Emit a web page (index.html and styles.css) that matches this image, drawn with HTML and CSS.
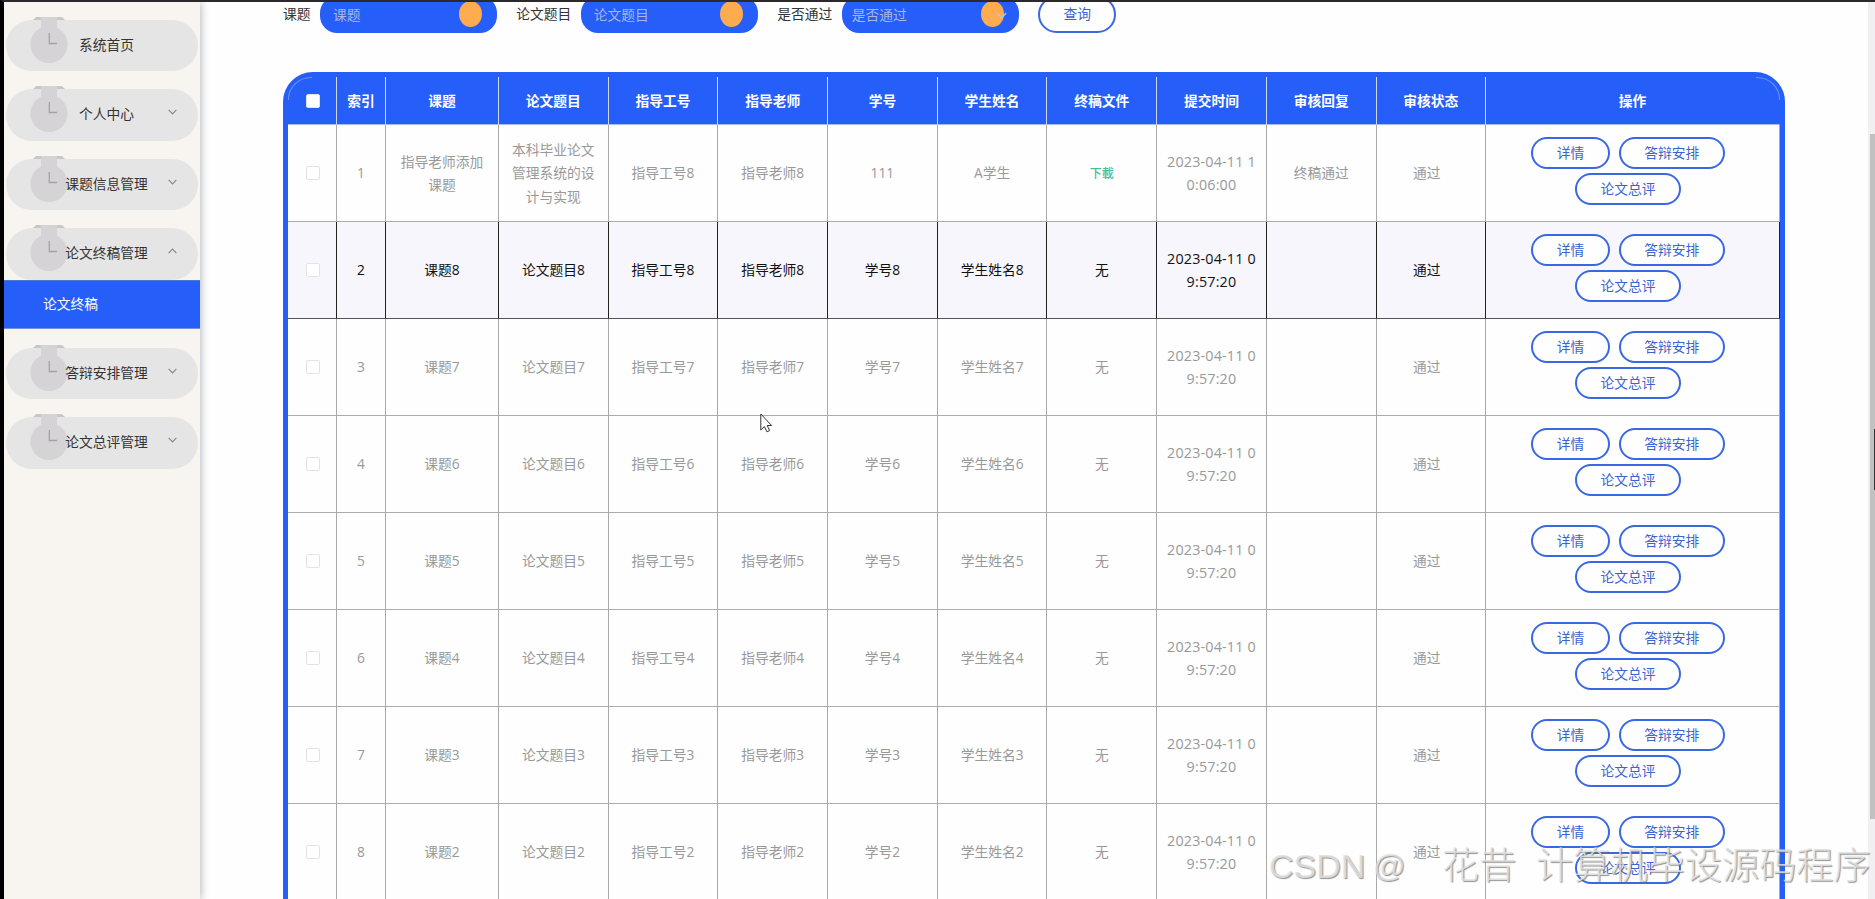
FILE: index.html
```html
<!DOCTYPE html>
<html lang="zh-CN">
<head>
    <meta charset="UTF-8">
    <meta name="viewport" content="width=device-width, initial-scale=1.0">
    <title>论文终稿</title>
    <link rel="stylesheet" href="styles.css">
</head>
<body>
    <svg class="symbols">
        <symbol id="watch" viewBox="0 0 40 47">
            <path d="M3 3 L6 0 H32 L35 3 Z" fill="#c8c7c9"/>
            <path d="M11 0 H27 V14 H11 Z" fill="#d5d3d6"/>
            <circle cx="19" cy="27.5" r="18.6" fill="#d5d3d6"/>
            <path d="M19.3 16 V26.5 H27" fill="none" stroke="#a3a2a4" stroke-width="1.3"/>
        </symbol>
        <symbol id="arrow" viewBox="0 0 10 6">
            <path d="M0.7 0.7 L5 5 L9.3 0.7" fill="none" stroke="currentColor" stroke-width="1.3"/>
        </symbol>
    </svg>

    <!-- 侧边菜单 -->
    <aside class="sidebar">
        <a class="menu-item"><svg class="watch"><use href="#watch"/></svg><span>系统首页</span></a>
        <a class="menu-item"><svg class="watch"><use href="#watch"/></svg><span>个人中心</span><svg class="arrow"><use href="#arrow"/></svg></a>
        <a class="menu-item"><svg class="watch"><use href="#watch"/></svg><span>课题信息管理</span><svg class="arrow"><use href="#arrow"/></svg></a>
        <a class="menu-item open"><svg class="watch"><use href="#watch"/></svg><span>论文终稿管理</span><svg class="arrow"><use href="#arrow"/></svg></a>
        <a class="submenu-item">论文终稿</a>
        <a class="menu-item"><svg class="watch"><use href="#watch"/></svg><span>答辩安排管理</span><svg class="arrow"><use href="#arrow"/></svg></a>
        <a class="menu-item"><svg class="watch"><use href="#watch"/></svg><span>论文总评管理</span><svg class="arrow"><use href="#arrow"/></svg></a>
    </aside>

    <main class="main">
        <!-- 查询条件 -->
        <div class="search">
            <label>课题</label>
            <div class="field">课题<i class="dot"></i></div>
            <label>论文题目</label>
            <div class="field">论文题目<i class="dot"></i></div>
            <label>是否通过</label>
            <div class="field select">是否通过<i class="dot"></i><svg class="arrow"><use href="#arrow"/></svg></div>
            <button class="btn search-btn">查询</button>
        </div>

        <!-- 数据表格 -->
        <div class="table-box">
            <table>
                <colgroup>
                    <col class="c-small"><col class="c-small"><col class="c-topic">
                    <col span="9" class="c-normal">
                    <col class="c-action">
                </colgroup>
                <thead>
                    <tr>
                        <th><i class="check"></i></th><th>索引</th><th>课题</th><th>论文题目</th><th>指导工号</th><th>指导老师</th><th>学号</th><th>学生姓名</th><th>终稿文件</th><th>提交时间</th><th>审核回复</th><th>审核状态</th><th>操作</th>
                    </tr>
                </thead>
                <tbody>
                    <tr>
                        <td><i class="check"></i></td><td>1</td><td>指导老师添加课题</td><td>本科毕业论文管理系统的设计与实现</td><td>指导工号8</td><td>指导老师8</td><td>111</td><td>A学生</td><td><a class="download">下載</a></td><td class="time">2023-04-11 1<br>0:06:00</td><td>终稿通过</td><td class="status">通过</td>
                        <td class="actions"><button class="btn">详情</button><button class="btn">答辩安排</button><button class="btn">论文总评</button></td>
                    </tr>
                    <tr class="hover">
                        <td><i class="check"></i></td><td>2</td><td>课题8</td><td>论文题目8</td><td>指导工号8</td><td>指导老师8</td><td>学号8</td><td>学生姓名8</td><td>无</td><td class="time">2023-04-11 0<br>9:57:20</td><td></td><td class="status">通过</td>
                        <td class="actions"><button class="btn">详情</button><button class="btn">答辩安排</button><button class="btn">论文总评</button></td>
                    </tr>
                    <tr>
                        <td><i class="check"></i></td><td>3</td><td>课题7</td><td>论文题目7</td><td>指导工号7</td><td>指导老师7</td><td>学号7</td><td>学生姓名7</td><td>无</td><td class="time">2023-04-11 0<br>9:57:20</td><td></td><td class="status">通过</td>
                        <td class="actions"><button class="btn">详情</button><button class="btn">答辩安排</button><button class="btn">论文总评</button></td>
                    </tr>
                    <tr>
                        <td><i class="check"></i></td><td>4</td><td>课题6</td><td>论文题目6</td><td>指导工号6</td><td>指导老师6</td><td>学号6</td><td>学生姓名6</td><td>无</td><td class="time">2023-04-11 0<br>9:57:20</td><td></td><td class="status">通过</td>
                        <td class="actions"><button class="btn">详情</button><button class="btn">答辩安排</button><button class="btn">论文总评</button></td>
                    </tr>
                    <tr>
                        <td><i class="check"></i></td><td>5</td><td>课题5</td><td>论文题目5</td><td>指导工号5</td><td>指导老师5</td><td>学号5</td><td>学生姓名5</td><td>无</td><td class="time">2023-04-11 0<br>9:57:20</td><td></td><td class="status">通过</td>
                        <td class="actions"><button class="btn">详情</button><button class="btn">答辩安排</button><button class="btn">论文总评</button></td>
                    </tr>
                    <tr>
                        <td><i class="check"></i></td><td>6</td><td>课题4</td><td>论文题目4</td><td>指导工号4</td><td>指导老师4</td><td>学号4</td><td>学生姓名4</td><td>无</td><td class="time">2023-04-11 0<br>9:57:20</td><td></td><td class="status">通过</td>
                        <td class="actions"><button class="btn">详情</button><button class="btn">答辩安排</button><button class="btn">论文总评</button></td>
                    </tr>
                    <tr>
                        <td><i class="check"></i></td><td>7</td><td>课题3</td><td>论文题目3</td><td>指导工号3</td><td>指导老师3</td><td>学号3</td><td>学生姓名3</td><td>无</td><td class="time">2023-04-11 0<br>9:57:20</td><td></td><td class="status">通过</td>
                        <td class="actions"><button class="btn">详情</button><button class="btn">答辩安排</button><button class="btn">论文总评</button></td>
                    </tr>
                    <tr>
                        <td><i class="check"></i></td><td>8</td><td>课题2</td><td>论文题目2</td><td>指导工号2</td><td>指导老师2</td><td>学号2</td><td>学生姓名2</td><td>无</td><td class="time">2023-04-11 0<br>9:57:20</td><td></td><td class="status">通过</td>
                        <td class="actions"><button class="btn">详情</button><button class="btn">答辩安排</button><button class="btn">论文总评</button></td>
                    </tr>
                </tbody>
            </table>
        </div>
    </main>

    <!-- 滚动条 -->
    <div class="scrollbar">
        <div class="thumb"></div>
        <div class="edge-mark"></div>
    </div>

    <svg class="cursor" viewBox="0 0 13 20">
        <path d="M0.8 1 V17 L4.4 13.6 L7 18.8 L9.6 17.6 L7.2 12.5 H11.6 Z" fill="#fff" stroke="#333" stroke-width="1"/>
    </svg>

    <!-- 水印 -->
    <div class="watermark"><span class="wm-site">CSDN</span><span class="wm-at">@</span><span class="wm-name">花昔</span><span>计算机毕设源码程序</span></div>
</body>
</html>
```
FILE: styles.css
```css
* {
    margin: 0;
    padding: 0;
    box-sizing: border-box;
}

body {
    display: flex;
    position: relative;
    width: 100%;
    height: 899px;
    overflow: hidden;
    border-top: 2px solid #2b292b;
    border-left: 4px solid #000;
    background: #fefefe;
    color: #333;
    font-family: "Open Sans", "Noto Sans CJK SC", sans-serif;
    font-size: 13.75px;
}

.symbols {
    position: absolute;
    width: 0;
    height: 0;
}

/* 侧边菜单 */
.sidebar {
    flex: none;
    width: 196px;
    height: 897px;
    padding-top: 17.5px;
    background: #f8f5f0;
    box-shadow: 1px 0 8px rgba(0, 21, 41, 0.3);
}

.menu-item {
    display: flex;
    align-items: center;
    justify-content: center;
    position: relative;
    width: 192px;
    height: 51.5px;
    margin: 0 2px 18px;
    padding: 0 0 3px 9px;
    border-radius: 26px;
    background: #e5e5e5;
    color: #333;
}

.menu-item .watch {
    position: absolute;
    left: 24px;
    top: -3px;
    width: 40px;
    height: 47px;
}

.menu-item span {
    position: relative;
}

.menu-item .arrow {
    position: absolute;
    right: 21px;
    top: 20px;
    width: 9px;
    height: 6px;
    color: #85878c;
}

.menu-item.open {
    margin-bottom: 0;
}

.menu-item.open .arrow {
    transform: rotate(180deg);
}

.submenu-item {
    display: flex;
    align-items: center;
    height: 49px;
    margin-bottom: 19px;
    padding: 0 0 2px 39px;
    border-top: 1px solid #4a78d6;
    border-bottom: 1px solid #6f95dc;
    background: #265efa;
    color: #fff;
}

/* 主体 */
.main {
    flex: 1;
    padding-left: 83px;
    overflow: hidden;
}

.search {
    display: flex;
    align-items: center;
    height: 37px;
    margin-top: -6px;
}

.search label {
    line-height: 20px;
    margin-right: 9.5px;
    padding-bottom: 2px;
}

.field {
    display: flex;
    align-items: center;
    position: relative;
    width: 177px;
    height: 37px;
    margin-right: 19.3px;
    padding: 0 0 2px 13px;
    border-radius: 17px;
    background: #265efa;
    color: #a9b6e2;
}

.field.select {
    padding-left: 10px;
}

.field .dot {
    position: absolute;
    right: 15px;
    top: 5px;
    width: 23px;
    height: 26px;
    border-radius: 50%;
    background: #ffab4f;
}

.field .arrow {
    position: absolute;
    right: 12px;
    top: 16px;
    width: 11px;
    height: 7px;
    color: #c0c4cc;
}

.btn {
    height: 31.5px;
    padding: 0 23.5px;
    border: 2px solid #3a68e4;
    border-radius: 16px;
    background: #fefefe;
    color: #3c63cf;
    font-family: inherit;
    font-size: 13.75px;
    line-height: 20px;
}

.search-btn {
    height: 37px;
    padding-bottom: 2px;
    border-radius: 19px;
}

/* 表格 */
.table-box {
    width: 1502px;
    height: 900px;
    margin-top: 39px;
    border: 5px solid #265efa;
    border-radius: 30px 30px 0 0;
    background: #265efa;
}

table {
    width: 1492px;
    table-layout: fixed;
    border-collapse: separate;
    border-spacing: 0;
    text-align: center;
}

.c-small {
    width: 49px;
}

.c-topic {
    width: 113px;
}

.c-normal {
    width: 109.7px;
}

th {
    position: relative;
    height: 48px;
    padding-bottom: 2px;
    border-right: 1px solid #cdd8f5;
    border-bottom: 1px solid #a9bdf3;
    color: #fff;
    font-weight: 700;
}

th:first-child {
    padding: 0;
}

/* 表头圆角处的细线 */
th:first-child::before,
th:last-child::before {
    content: "";
    position: absolute;
    top: 0;
    width: 23px;
    height: 22px;
}

th:first-child::before {
    left: 0;
    border-top: 1px solid #6c90f5;
    border-left: 1px solid #6c90f5;
    border-top-left-radius: 23px 22px;
}

th:last-child::before {
    right: -1px;
    border-top: 1px solid #6c90f5;
    border-right: 1px solid #6c90f5;
    border-top-right-radius: 23px 22px;
}

th:last-child {
    border-right-color: transparent;
}

td {
    height: 97px;
    padding: 0 12px;
    border-right: 1px solid #a9a9a9;
    border-bottom: 1px solid #acacac;
    background: #fefefe;
    color: #999;
    line-height: 23.5px;
}

td:first-child,
td:nth-child(2) {
    padding: 0;
}

.hover td {
    border-right-color: #222;
    border-bottom-color: #555;
    background: #f6f6fc;
    color: #111;
}

.check {
    display: block;
    width: 14px;
    height: 14px;
    margin: 0 auto;
    border: 1px solid #e2e3e8;
    border-radius: 2px;
    background: #fff;
}

td:first-child .check,
th:first-child .check {
    margin-left: 18px;
}

.download {
    color: #45bd9f;
    font-size: 12px;
    font-weight: 500;
}

td.time {
    padding: 0;
    font-size: 14.3px;
    letter-spacing: 0.2px;
}

td.status {
    padding: 0 20px 0 12px;
}

td.actions {
    padding: 12px 40px 0;
    font-size: 0;
    line-height: 0;
    vertical-align: top;
}

.actions .btn {
    margin: 0 9px 4.7px 0;
}

/* 滚动条 */
.scrollbar {
    position: relative;
    flex: none;
    width: 7px;
    height: 897px;
    padding: 132px 0 0 2px;
    background: #f1eff2;
}

.thumb {
    height: 685px;
    background: #c1c1c1;
}

.edge-mark {
    position: absolute;
    right: 0;
    top: 427px;
    width: 1px;
    height: 61px;
    background: #333;
}

.cursor {
    position: absolute;
    left: 756px;
    top: 411px;
    width: 13px;
    height: 20px;
}

/* 水印 */
.watermark {
    display: flex;
    position: absolute;
    left: 1265px;
    top: 838px;
    color: rgba(226, 226, 226, 0.85);
    font-family: "Liberation Sans", "Noto Sans CJK SC", sans-serif;
    font-size: 37.2px;
    font-weight: 300;
    line-height: 52px;
    text-shadow: 1px 1px 1px rgba(110, 110, 110, 0.75);
    white-space: nowrap;
}

.wm-site {
    width: 104px;
    font-size: 34px;
}

.wm-at {
    width: 69px;
    font-size: 32px;
}

.wm-name {
    width: 94px;
}
```
